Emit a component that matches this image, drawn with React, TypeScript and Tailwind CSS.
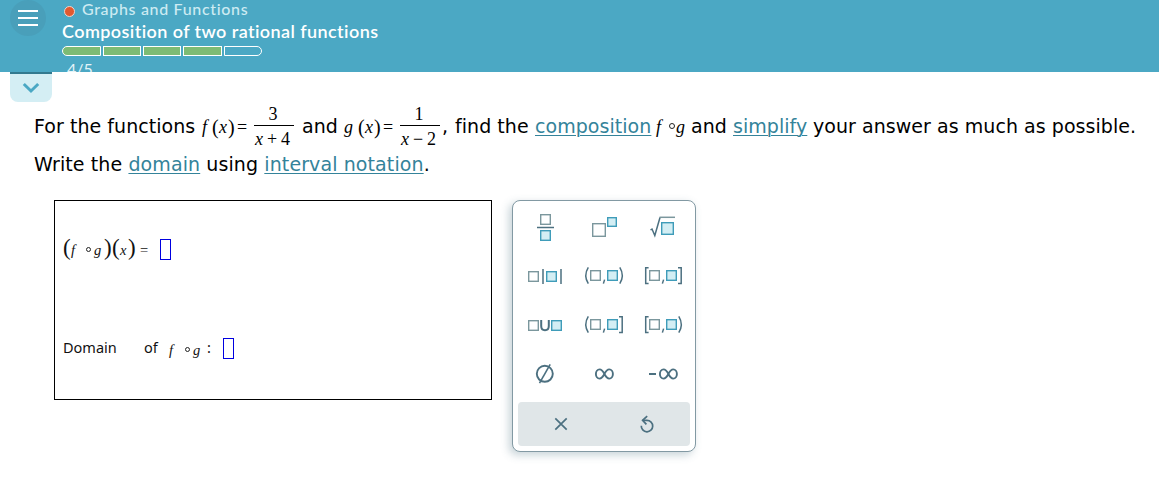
import type { ReactNode } from "react";

const SLATE = "#4c7080";

function Box({ x, y, s = 11, filled = false }: { x: number; y: number; s?: number; filled?: boolean }) {
  return (
    <rect
      x={x + 0.7}
      y={y + 0.7}
      width={s - 1.4}
      height={s - 1.4}
      strokeWidth={1.4}
      stroke={filled ? "#3f9cb9" : "#7b979d"}
      fill={filled ? "#d3eef4" : "#ffffff"}
    />
  );
}

function Key({ label, children }: { label: string; children: ReactNode }) {
  return (
    <button aria-label={label} className="h-[49px] w-[59px]">
      <svg width="59" height="49" viewBox="0 0 59 49" fill="none" stroke={SLATE} strokeWidth="1.5">
        {children}
      </svg>
    </button>
  );
}

const LEFT = {
  paren: "M13.3 16.3 Q8.3 24.5 13.3 32.7",
  bracket: "M14.6 16.7 H11.7 V32.4 H14.6",
};

const RIGHT = {
  paren: "M44.8 16.3 Q49.8 24.5 44.8 32.7",
  bracket: "M44 16.7 H47.2 V32.4 H44",
};

function Interval({ left, right }: { left: keyof typeof LEFT; right: keyof typeof RIGHT }) {
  return (
    <>
      <path d={LEFT[left]} />
      <Box x={15} y={19} />
      <path d="M29.6 28.6 L28.4 32.6" />
      <Box x={32} y={19} filled />
      <path d={RIGHT[right]} />
    </>
  );
}

function Infinity({ cx }: { cx: number }) {
  return (
    <g transform={`translate(${cx} 25)`}>
      <path
        strokeWidth="1.9"
        d="M0 0 C-1.6 -3 -2.8 -4.6 -4.8 -4.6 C-7 -4.6 -8.5 -2.6 -8.5 0 C-8.5 2.6 -7 4.6 -4.8 4.6 C-2.8 4.6 -1.6 3 0 0 C1.6 -3 2.8 -4.6 4.8 -4.6 C7 -4.6 8.5 -2.6 8.5 0 C8.5 2.6 7 4.6 4.8 4.6 C2.8 4.6 1.6 3 0 0 Z"
      />
    </g>
  );
}

function Header() {
  return (
    <header className="flex h-[72px] overflow-hidden bg-[#4ba8c4] pl-[10px] font-['Lato',sans-serif]">
      <button aria-label="Menu" className="flex h-9 w-9 flex-col items-center justify-center gap-[5px] rounded-full bg-[#499fba]">
        <span className="h-[2px] w-5 bg-white" />
        <span className="h-[2px] w-5 bg-white" />
        <span className="h-[2px] w-5 bg-white" />
      </button>
      <div className="ml-4 whitespace-nowrap">
        <div className="flex h-5 items-start text-[16px] leading-5 text-[#cdebf2]">
          <span className="mt-[6px] ml-[2px] mr-[7px] h-[11px] w-[11px] rounded-full border border-[#f0d5cc] bg-[#e2592f]" />
          <span className="-mt-px font-medium tracking-[0.67px]">Graphs and Functions</span>
        </div>
        <h1 className="h-[26px] text-[18px] leading-[23px] font-semibold tracking-[0.42px] text-white">Composition of two rational functions</h1>
        <div className="flex h-[10px] gap-[2px]">
          <span className="w-[39px] rounded-l-[5px] border border-white bg-[#7dbb74]" />
          <span className="w-[38px] border border-white bg-[#7dbb74]" />
          <span className="w-[38px] border border-white bg-[#7dbb74]" />
          <span className="w-[39px] border border-white bg-[#7dbb74]" />
          <span className="w-[38px] rounded-r-[5px] border border-white" />
        </div>
        <div className="mt-[3px] ml-[5px] text-[16px] leading-5 text-[#e4f4f8]">4/5</div>
      </div>
    </header>
  );
}

function Fraction({ top, children }: { top: string; children: ReactNode }) {
  return (
    <span className="flex w-[40px] shrink-0 flex-col items-center font-['Liberation_Serif',serif] text-[18px] leading-[23px]">
      <span className="-ml-[2px] h-[23px] pt-px">{top}</span>
      <span className="h-px w-full bg-black" />
      <span className="flex h-[24px] w-full pt-[2px] pl-[1px]">{children}</span>
    </span>
  );
}

function Circ({ className }: { className: string }) {
  return <span className={`shrink-0 rounded-full border border-[#222] ${className}`} />;
}

const serif = "shrink-0 font-['Liberation_Serif',serif]";
const link = "shrink-0 text-[#34839a] underline decoration-1 underline-offset-[2px]";

function Question() {
  return (
    <section className="pl-[34px] font-['DejaVu_Sans',sans-serif] text-[19px] leading-6 tracking-[0.05px] whitespace-nowrap text-black">
      <div className="flex h-[48px] items-center">
        <span className="w-[168px] shrink-0">For the functions</span>
        <span className={`${serif} flex w-[52px] pt-[2px] text-[18px]`}>
          <i className="w-[10px]">f</i>
          <span className="w-[7px] text-[20px]">(</span>
          <i className="w-[9px]">x</i>
          <span className="w-[9px] text-[20px]">)</span>
          <span>=</span>
        </span>
        <Fraction top="3">
          <i className="w-[12px]">x</i>
          <span className="w-[14px]">+</span>
          <span>4</span>
        </Fraction>
        <span className="ml-[8px] w-[42px] shrink-0">and</span>
        <span className={`${serif} flex w-[56px] pt-[2px] text-[18px]`}>
          <i className="w-[14px]">g</i>
          <span className="w-[7px] text-[20px]">(</span>
          <i className="w-[9px]">x</i>
          <span className="w-[9px] text-[20px]">)</span>
          <span>=</span>
        </span>
        <Fraction top="1">
          <i className="w-[12px]">x</i>
          <span className="w-[14px]">−</span>
          <span>2</span>
        </Fraction>
        <span className="ml-[2px] w-[13px] shrink-0">,</span>
        <span className="w-[80px] shrink-0">find the</span>
        <a className={`${link} w-[115px]`}>composition</a>
        <span className={`${serif} flex items-center pt-[2px] pl-[6px] text-[18px]`}>
          <i className="w-[13px]">f</i>
          <Circ className="mr-[1px] mb-[2px] h-[6px] w-[6px]" />
          <i className="w-[15px]">g</i>
        </span>
        <span className="w-[42px] shrink-0">and</span>
        <a className={`${link} w-[74px]`}>simplify</a>
        <span className="ml-[6px]">your answer as much as possible.</span>
      </div>
      <p className="mt-[2px] tracking-[0.1px]">
        Write the <a className={link}>domain</a> using <a className={link}>interval notation</a>.
      </p>
    </section>
  );
}

function Answer() {
  return (
    <div className="h-[200px] w-[438px] border border-black pl-[8px] font-['Noto_Sans',sans-serif] text-[14.5px] leading-6 text-[#111]">
      <div className="mt-[37px] flex h-[23px] items-center font-['Liberation_Serif',serif]">
        <span className="-mt-[3px] w-[8px] text-[23px]">(</span>
        <i className="w-[15px]">f</i>
        <Circ className="mr-[3px] h-[5px] w-[5px]" />
        <i className="w-[10px]">g</i>
        <span className="-mt-[3px] w-[8px] text-[23px]">)</span>
        <span className="-mt-[3px] w-[8px] text-[23px]">(</span>
        <i className="w-[8px]">x</i>
        <span className="-mt-[3px] w-[12px] text-[23px]">)</span>
        <span className="w-[20px]">=</span>
        <span className="h-[21px] w-[11px] border border-[#0000e0]" />
      </div>
      <div className="mt-[75px] flex h-[24px] items-center">
        <span className="w-[81px] pb-[3px]">Domain</span>
        <span className="w-[25px] pb-[3px]">of</span>
        <i className="w-[16px] pt-[3px] font-['Liberation_Serif',serif]">f</i>
        <Circ className="mt-[2px] mr-[3px] h-[5px] w-[5px]" />
        <i className="w-[14px] pt-[3px] font-['Liberation_Serif',serif]">g</i>
        <span className="w-[16px] pb-[3px]">:</span>
        <span className="mt-[1px] h-[21px] w-[11px] border border-[#0000e0]" />
      </div>
    </div>
  );
}

function Keypad() {
  return (
    <div className="h-[252px] w-[184px] rounded-[8px] border border-[#8299a3] bg-white pt-px shadow-[-3px_3px_8px_rgba(70,110,125,0.3)]">
      <div className="grid grid-cols-[59px_59px_59px] pl-[3px]">
        <Key label="Fraction">
          <Box x={24} y={12} />
          <path d="M21 25.5 H38" />
          <Box x={24} y={28} filled />
        </Key>
        <Key label="Exponent">
          <Box x={17} y={21} s={14} />
          <Box x={32} y={15} s={10} filled />
        </Key>
        <Key label="Square root">
          <path d="M16.5 28 L18 27 L20.8 33.5 L26 15.5" />
          <path d="M25.5 15.3 H41" stroke="#7b979d" />
          <Box x={27} y={20} s={13} filled />
        </Key>
        <Key label="Absolute value">
          <Box x={12} y={20} />
          <path d="M27 18 V33 M45 18 V33" />
          <Box x={30} y={20} filled />
        </Key>
        <Key label="Open interval">
          <Interval left="paren" right="paren" />
        </Key>
        <Key label="Closed interval">
          <Interval left="bracket" right="bracket" />
        </Key>
        <Key label="Union">
          <Box x={12} y={20} />
          <path d="M25.2 20 V26 Q25.2 30.2 29 30.2 Q32.8 30.2 32.8 26 V20" strokeWidth="2" />
          <Box x={35} y={20} filled />
        </Key>
        <Key label="Half-open interval, right closed">
          <Interval left="paren" right="bracket" />
        </Key>
        <Key label="Half-open interval, left closed">
          <Interval left="bracket" right="paren" />
        </Key>
        <Key label="Empty set">
          <circle cx="28.8" cy="24.8" r="8" strokeWidth="1.9" />
          <path d="M23.5 34.2 L34.2 15.4" strokeWidth="1.6" />
        </Key>
        <Key label="Infinity">
          <Infinity cx={29.4} />
        </Key>
        <Key label="Negative infinity">
          <path d="M15 25 H22" strokeWidth="2" />
          <Infinity cx={34.4} />
        </Key>
      </div>
      <div className="mx-[5px] mt-[4px] grid h-[44px] grid-cols-2 rounded-[4px] bg-[#e0e6e8]">
        <button aria-label="Clear" className="flex items-center justify-center">
          <svg width="14" height="14" viewBox="0 0 14 14" stroke={SLATE} strokeWidth="1.7">
            <path d="M1.3 1.3 L12.7 12.7 M12.7 1.3 L1.3 12.7" />
          </svg>
        </button>
        <button aria-label="Undo" className="flex items-center justify-center">
          <svg width="18" height="20" viewBox="0 0 18 20" fill="none" stroke={SLATE} strokeWidth="1.7">
            <path d="M3.3 11.8 A5.7 5.7 0 1 0 9 6.4 H4.6" />
            <path d="M9.2 2.2 L4.6 6.4 L8.4 10.4" />
          </svg>
        </button>
      </div>
    </div>
  );
}

export default function App() {
  return (
    <div className="h-[490px] w-[1159px] overflow-hidden bg-white">
      <Header />
      <button aria-label="Expand" className="ml-[10px] flex h-[30px] w-[42px] items-center justify-center rounded-b-[8px] border-t-2 border-[#33798f] bg-[#d4eef4]">
        <svg width="18" height="12" viewBox="0 0 18 12" fill="none" stroke="#4ba8c4" strokeWidth="3">
          <path d="M1.8 2 L9 9 L16.2 2" />
        </svg>
      </button>
      <Question />
      <main className="mt-[24px] flex gap-[20px] pl-[54px]">
        <Answer />
        <Keypad />
      </main>
    </div>
  );
}
